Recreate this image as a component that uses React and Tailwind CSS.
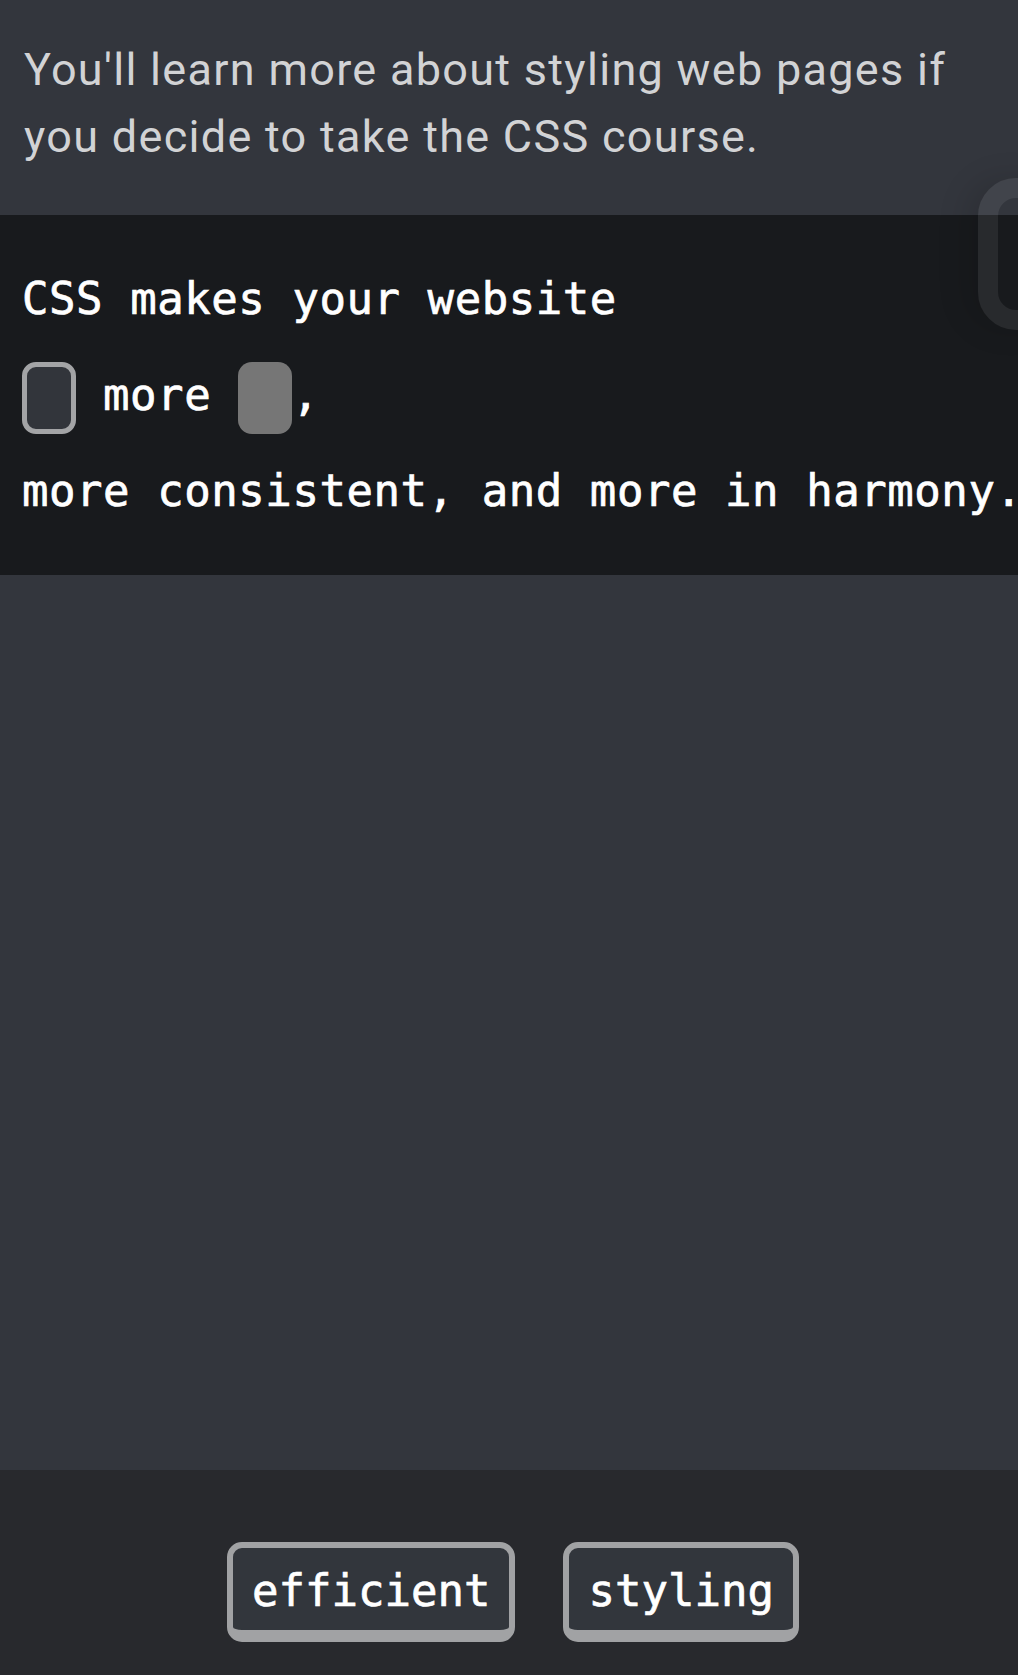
import React from "react";

const mono = { fontFamily: '"DejaVu Sans Mono", "Liberation Mono", monospace' };

function Blank({ filled }) {
  return filled ? (
    <span className="inline-block align-middle w-[54px] h-[72px] rounded-[14px] bg-[#767676]" />
  ) : (
    <span className="inline-block align-middle w-[54px] h-[72px] rounded-[14px] border-[5px] border-[#a3a4a6] bg-[#32353b]" />
  );
}

function Choice({ children }) {
  return (
    <button
      className="rounded-[15px] border-[6px] border-b-[12px] border-[#a1a2a4] bg-[#32363c] px-[19px] pt-[10px] pb-[6px] text-[44px] leading-[66px] text-white [-webkit-text-stroke:0.7px_white]"
      style={mono}
    >
      {children}
    </button>
  );
}

export default function App() {
  return (
    <div className="relative w-full min-h-[1675px] flex flex-col bg-[#33363d] overflow-hidden">
      <div
        className="pl-6 pt-[36px] pb-[45px] text-[45px] leading-[67px] text-[#d2d3d5] tracking-[1.3px]"
        style={{ fontFamily: 'Roboto, "Noto Sans", sans-serif' }}
      >
        You'll learn more about styling web pages if
        <br />
        you decide to take the CSS course.
      </div>

      <div
        className="bg-[#181a1d] pl-[22px] py-9 text-[44px] leading-[96px] text-white whitespace-nowrap tracking-[0.55px] [-webkit-text-stroke:0.7px_white]"
        style={mono}
      >
        <div>CSS makes your website</div>
        <div>
          <Blank /> more <Blank filled />,
        </div>
        <div>more consistent, and more in harmony.</div>
      </div>

      <div className="flex-1" />

      <div className="h-[205px] bg-[#28292d] pt-[72px] flex justify-center gap-[48px] items-start pl-[8px]">
        <Choice>efficient</Choice>
        <Choice>styling</Choice>
      </div>

      <div className="absolute left-[978px] top-[178px] w-[90px] h-[152px] rounded-[38px] border-[20px] border-white/[0.07] shadow-[-12px_0_30px_rgba(0,0,0,0.12)]" />
    </div>
  );
}
